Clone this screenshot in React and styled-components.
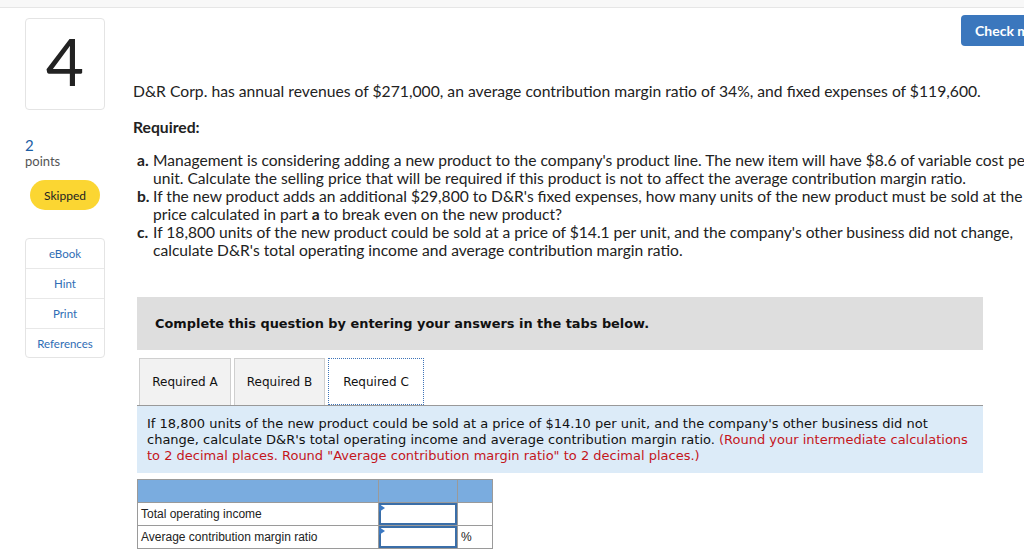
import React from "react";
import styled, { createGlobalStyle } from "styled-components";

const Global = createGlobalStyle`
  html, body { margin: 0; padding: 0; background: #fff; overflow: hidden; }
  body { font-family: Lato, "Open Sans", sans-serif; color: #222; }
`;

const TopStrip = styled.div`
  height: 7px;
  background: #f8f8f8;
  border-bottom: 1px solid #e6e6e6;
`;

const Main = styled.div`
  display: flex;
  align-items: flex-start;
  width: 1100px;
`;

const Sidebar = styled.aside`
  width: 80px;
  margin-left: 25px;
  padding-top: 10px;
  display: flex;
  flex-direction: column;
  align-items: stretch;
`;

const NumberBox = styled.div`
  height: 92px;
  border: 1px solid #e4e4e4;
  border-radius: 4px;
  display: flex;
  align-items: center;
  justify-content: center;
  font-family: Lato, sans-serif;
  font-size: 66px;
  font-weight: 400;
  color: #222;
  line-height: 1;
  padding-bottom: 6px;
  box-sizing: border-box;
`;

const Points = styled.div`
  margin-top: 27px;
  font-size: 15px;
  line-height: 17px;
  color: #1c5ea5;
`;

const PointsLabel = styled.div`
  font-size: 13px;
  line-height: 15px;
  color: #555;
`;

const Badge = styled.div`
  margin: 11px 5px 0;
  height: 30px;
  border-radius: 15px;
  background: #fbd632;
  color: #222;
  font-size: 12px;
  display: flex;
  align-items: center;
  justify-content: center;
`;

const LinkBox = styled.nav`
  margin-top: 28px;
  border: 1px solid #e4e4e4;
  border-radius: 4px;
  display: flex;
  flex-direction: column;
`;

const LinkItem = styled.div`
  height: ${(p) => p.$h}px;
  display: flex;
  align-items: center;
  justify-content: center;
  font-size: 11.5px;
  color: #2f6db5;
  & + & { border-top: 1px solid #e8e8e8; }
`;

const Content = styled.section`
  margin-left: 28px;
  width: 920px;
  display: flex;
  flex-direction: column;
  align-items: flex-start;
`;

const HeaderRow = styled.div`
  align-self: stretch;
  display: flex;
  justify-content: flex-end;
  padding-top: 7px;
`;

const CheckButton = styled.button`
  width: 92px;
  height: 31px;
  border: none;
  border-radius: 4px;
  background: #3b77bd;
  color: #fff;
  font-family: Lato, sans-serif;
  font-weight: 700;
  font-size: 14px;
  text-align: left;
  white-space: nowrap;
  overflow: hidden;
  padding: 0 0 0 14px;
`;

const Intro = styled.p`
  margin: 36px 0 0;
  font-size: 15.7px;
  line-height: 18px;
  white-space: nowrap;
`;

const ReqTitle = styled.p`
  margin: 18px 0 0;
  font-size: 15.7px;
  font-weight: 700;
  line-height: 18px;
`;

const List = styled.div`
  margin: 15px 0 0 4px;
  display: flex;
  flex-direction: column;
`;

const Item = styled.div`
  display: flex;
  font-size: 15.6px;
  line-height: 18px;
`;

const Marker = styled.span`
  width: 16px;
  font-weight: 700;
  flex: none;
`;

const Lines = styled.div`
  display: flex;
  flex-direction: column;
  white-space: nowrap;
`;

const Instruction = styled.div`
  margin: 38px 0 0 4px;
  width: 846px;
  height: 53px;
  box-sizing: border-box;
  background: #dedede;
  padding-left: 18px;
  display: flex;
  align-items: center;
  font-family: "DejaVu Sans", Verdana, sans-serif;
  font-weight: 700;
  font-size: 12.9px;
  color: #111;
`;

const Tabs = styled.div`
  margin: 8px 0 0 6px;
  display: flex;
  gap: 3px;
  height: 47px;
`;

const Tab = styled.div`
  width: ${(p) => p.$w}px;
  box-sizing: border-box;
  display: flex;
  align-items: center;
  justify-content: center;
  font-family: "DejaVu Sans", Verdana, sans-serif;
  font-size: 12px;
  color: #111;
  background: ${(p) => (p.$active ? "#fff" : "#f2f2f2")};
  border: ${(p) => (p.$active ? "1px dotted #3f74b8" : "1px solid #cfcfcf")};
  border-bottom: ${(p) => (p.$active ? "1px dotted #3f74b8" : "none")};
`;

const Panel = styled.div`
  margin-left: 4px;
  width: 846px;
  box-sizing: border-box;
  background: #dcebf8;
  border-top: 1px solid #999;
  padding: 10px 10px 9px 10px;
  font-family: "DejaVu Sans", Verdana, sans-serif;
  font-size: 13px;
  line-height: 16px;
  color: #111;
`;

const PanelLine = styled.div`
  white-space: nowrap;
`;

const Red = styled.span`
  color: #c4161c;
`;

const Table = styled.table`
  margin: 6px 0 0 4px;
  border-collapse: collapse;
  table-layout: fixed;
  width: 356px;
  font-family: "Liberation Sans", Arial, sans-serif;
  font-size: 12px;
  color: #222;
`;

const Col = styled.col`
  width: ${(p) => p.$w}px;
`;

const HeadCell = styled.td`
  background: #7aacdf;
  border: 1px solid #9a9a9a;
  height: 22px;
  padding: 0;
`;

const Cell = styled.td`
  border: 1px solid #9a9a9a;
  height: 22px;
  padding: 0 3px;
  white-space: nowrap;
`;

const InputCell = styled.td`
  border: 1px solid #9a9a9a;
  padding: 0;
  height: 22px;
`;

const InputBox = styled.div`
  height: 22px;
  box-sizing: border-box;
  border: 2px solid #3a6ea8;
  background: #fff;
  position: relative;
  &::before {
    content: "";
    position: absolute;
    left: -2px;
    top: -1px;
    border-left: 6px solid #3a78c2;
    border-top: 4px solid transparent;
    border-bottom: 4px solid transparent;
  }
`;

export default function App() {
  return (
    <>
      <Global />
      <TopStrip />
      <Main>
        <Sidebar>
          <NumberBox>4</NumberBox>
          <Points>2</Points>
          <PointsLabel>points</PointsLabel>
          <Badge>Skipped</Badge>
          <LinkBox>
            <LinkItem $h={29}>eBook</LinkItem>
            <LinkItem $h={29}>Hint</LinkItem>
            <LinkItem $h={29}>Print</LinkItem>
            <LinkItem $h={28}>References</LinkItem>
          </LinkBox>
        </Sidebar>
        <Content>
          <HeaderRow>
            <CheckButton>Check my work</CheckButton>
          </HeaderRow>
          <Intro>
            D&amp;R Corp. has annual revenues of $271,000, an average contribution margin ratio of 34%, and fixed expenses of $119,600.
          </Intro>
          <ReqTitle>Required:</ReqTitle>
          <List>
            <Item>
              <Marker>a.</Marker>
              <Lines>
                <span>Management is considering adding a new product to the company's product line. The new item will have $8.6 of variable cost per</span>
                <span>unit. Calculate the selling price that will be required if this product is not to affect the average contribution margin ratio.</span>
              </Lines>
            </Item>
            <Item>
              <Marker>b.</Marker>
              <Lines>
                <span>If the new product adds an additional $29,800 to D&amp;R's fixed expenses, how many units of the new product must be sold at the</span>
                <span>price calculated in part <b>a</b> to break even on the new product?</span>
              </Lines>
            </Item>
            <Item>
              <Marker>c.</Marker>
              <Lines>
                <span>If 18,800 units of the new product could be sold at a price of $14.1 per unit, and the company's other business did not change,</span>
                <span>calculate D&amp;R's total operating income and average contribution margin ratio.</span>
              </Lines>
            </Item>
          </List>
          <Instruction>Complete this question by entering your answers in the tabs below.</Instruction>
          <Tabs>
            <Tab $w={92}>Required A</Tab>
            <Tab $w={91}>Required B</Tab>
            <Tab $w={96} $active>Required C</Tab>
          </Tabs>
          <Panel>
            <PanelLine>If 18,800 units of the new product could be sold at a price of $14.10 per unit, and the company's other business did not</PanelLine>
            <PanelLine>change, calculate D&amp;R's total operating income and average contribution margin ratio. <Red>(Round your intermediate calculations</Red></PanelLine>
            <PanelLine><Red>to 2 decimal places. Round "Average contribution margin ratio" to 2 decimal places.)</Red></PanelLine>
          </Panel>
          <Table>
            <colgroup>
              <Col $w={241} />
              <Col $w={79} />
              <Col $w={35} />
            </colgroup>
            <tbody>
              <tr>
                <HeadCell />
                <HeadCell />
                <HeadCell />
              </tr>
              <tr>
                <Cell>Total operating income</Cell>
                <InputCell><InputBox /></InputCell>
                <Cell />
              </tr>
              <tr>
                <Cell>Average contribution margin ratio</Cell>
                <InputCell><InputBox /></InputCell>
                <Cell>%</Cell>
              </tr>
            </tbody>
          </Table>
        </Content>
      </Main>
    </>
  );
}
